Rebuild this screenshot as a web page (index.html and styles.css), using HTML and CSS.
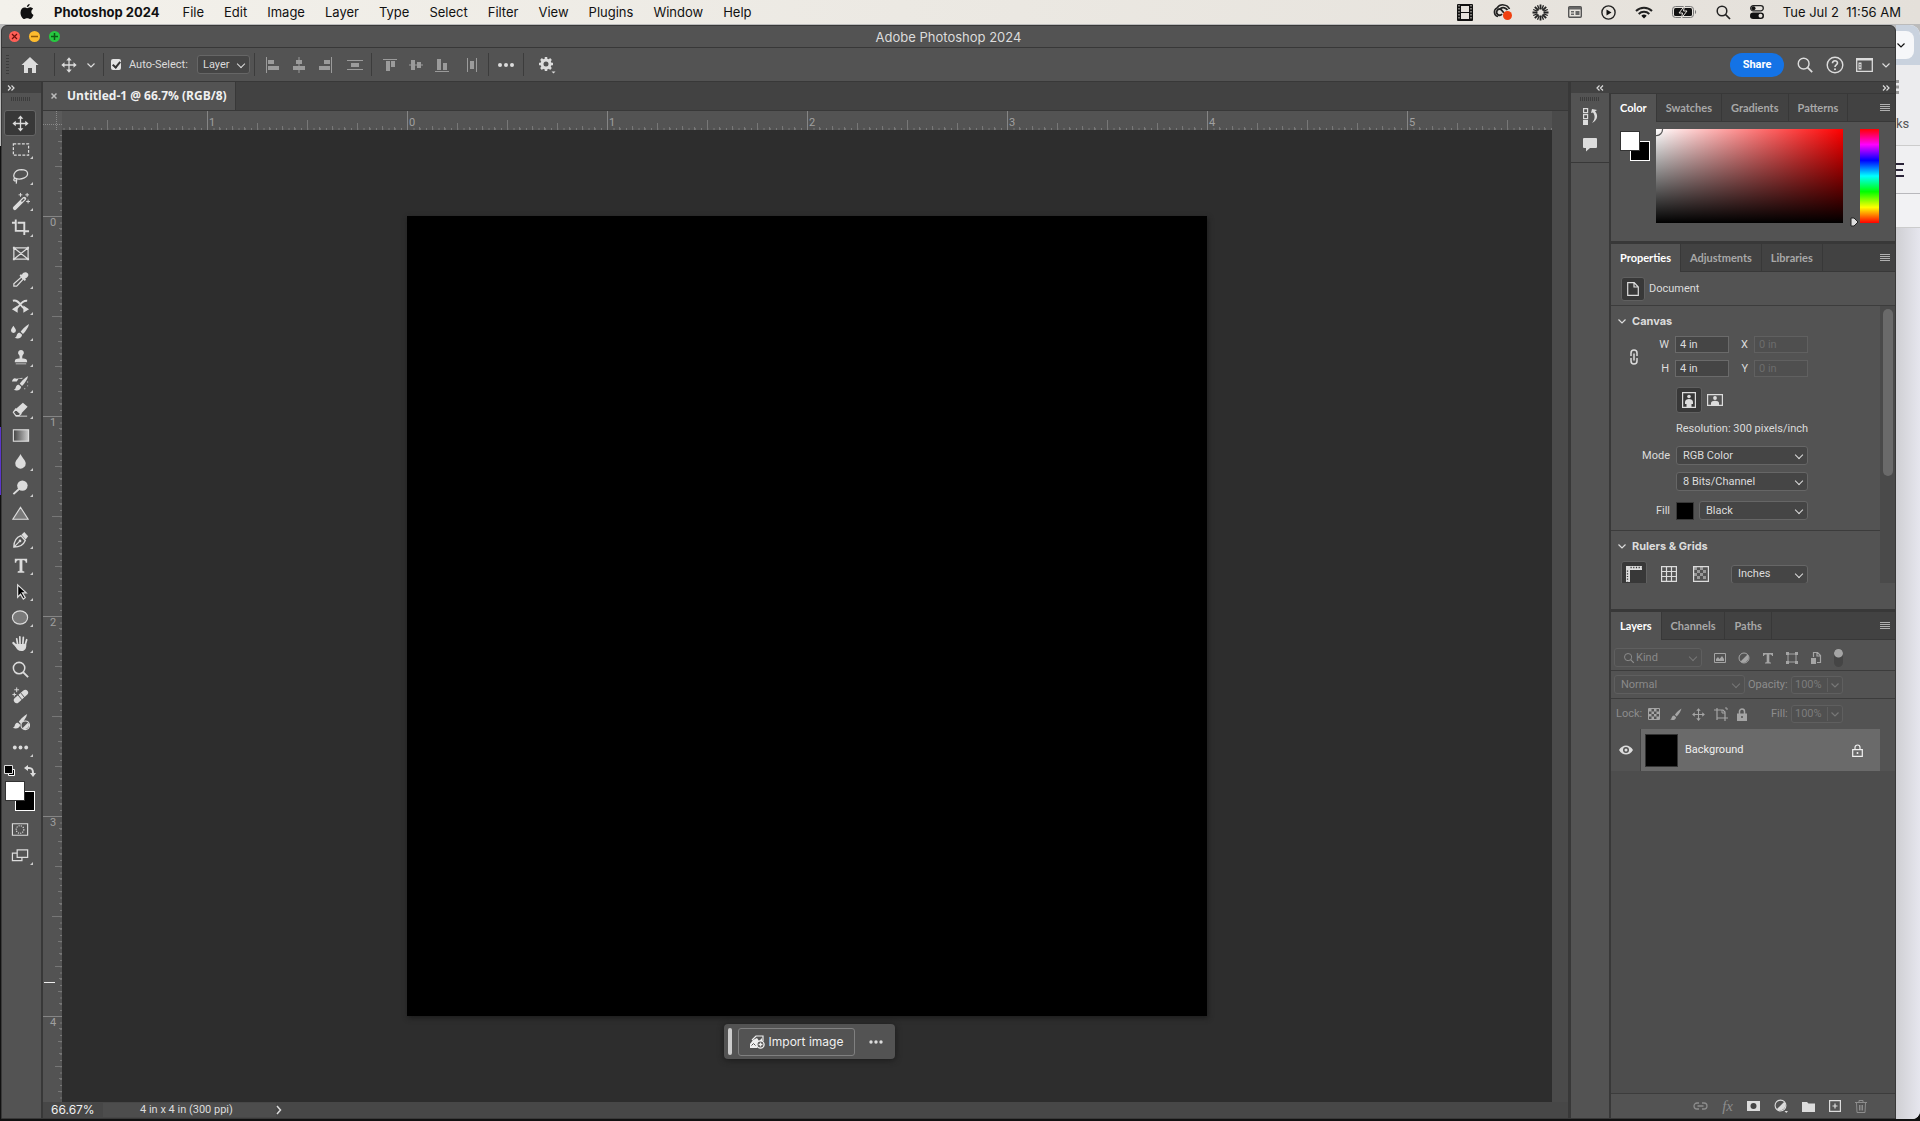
FILE: index.html
```html
<!DOCTYPE html>
<html lang="en">
<head>
  <meta charset="utf-8">
  <title>Adobe Photoshop 2024</title>
  <link rel="stylesheet" href="styles.css">
</head>
<body>
  <svg class="defs" aria-hidden="true">
    <symbol id="i-move" viewBox="0 0 20 20"><path d="M10 4v12M4 10h12" stroke="currentColor" stroke-width="1.4"/><path d="M10 1.500l3 3.500H7zM10 18.500l3-3.500H7zM1.500 10l3.500-3v6zM18.500 10l-3.500-3v6z"/></symbol>
    <symbol id="i-search" viewBox="0 0 20 20"><circle cx="8.500" cy="8.500" r="6" fill="none" stroke="currentColor" stroke-width="1.600"/><path d="M12.700 12.700l5.300 5.300" stroke="currentColor" stroke-width="2"/></symbol>
    <symbol id="i-chev" viewBox="0 0 10 10"><path d="M1.500 3.500l3.500 3.500 3.500-3.500" fill="none" stroke="currentColor" stroke-width="1.200"/></symbol>
    <symbol id="i-menu" viewBox="0 0 10 8"><path d="M0 .5h10M0 2.500h10M0 4.500h10M0 6.500h10" stroke="currentColor"/></symbol>
    <symbol id="i-half" viewBox="0 0 12 12"><circle cx="6" cy="6" r="5" fill="none" stroke="currentColor"/><path d="M9.500 2.500A5 5 0 0 1 2.500 9.500z"/></symbol>
    <symbol id="i-brush" viewBox="0 0 20 20"><path d="M18 2c-3 1.500-7 5.500-8.800 8.300l2.400 2.200C14.300 10 17.300 5.500 18 2zM8.300 11.300c-2.800 0-3 2-3.600 3.700-.4 1-1 1.400-1.900 1.700 3.500 1.300 7.600.5 7.900-3.200z"/></symbol>
    <symbol id="i-left2" viewBox="0 0 8 6"><path d="M3.500.5L1 3l2.500 2.500M7 .5L4.500 3 7 5.500" fill="none" stroke="currentColor" stroke-width="1.200"/></symbol>
    <symbol id="i-right2" viewBox="0 0 8 6"><path d="M1 .5L3.500 3 1 5.500M4.500.5L7 3 4.500 5.500" fill="none" stroke="currentColor" stroke-width="1.200"/></symbol>
  </svg>

  <header class="menubar">
    <svg class="apple" width="14" height="16" viewBox="0 0 14 16"><path d="M9.700 0c.1 1.500-1.300 3-2.800 3C6.700 1.600 8.200.1 9.700 0zM7.100 4.200c.7 0 1.700-.9 3.100-.9 1 0 2.100.5 2.900 1.500-2.600 1.600-2.100 5 .4 6.100-.6 1.700-2 4.100-3.500 4.100-1.100 0-1.500-.7-2.800-.7s-1.800.7-2.800.7C2.400 15 .5 11.600.5 8.700c0-3.300 2.100-5.200 4-5.200 1.200 0 2 .7 2.600.7z"/></svg>
    <nav>
      <a href="#" class="app">Photoshop 2024</a>
      <a href="#">File</a>
      <a href="#">Edit</a>
      <a href="#">Image</a>
      <a href="#">Layer</a>
      <a href="#">Type</a>
      <a href="#">Select</a>
      <a href="#">Filter</a>
      <a href="#">View</a>
      <a href="#">Plugins</a>
      <a href="#">Window</a>
      <a href="#">Help</a>
    </nav>
    <div class="tray">
      <svg width="16" height="17" viewBox="0 0 16 17"><rect width="16" height="17" rx="1"/><path d="M4 2h8v6H4zM4 9h8v6H4z" fill="#e6e2dc"/><path d="M2 1v15M14 1v15" stroke="#e6e2dc" stroke-dasharray="1.500 1.500"/></svg>
      <svg width="21" height="18" viewBox="0 0 21 18"><path d="M6 13.500a4.500 4.500 0 0 1-1-8.500A7 6.500 0 0 1 17.500 6" fill="none" stroke="#222" stroke-width="1.500"/><path d="M10 11a3 3 0 1 1-1-4.500l3 3.500M8.500 5.500a5 5 0 0 1 7 1.500" fill="none" stroke="#222" stroke-width="1.800"/><circle cx="15.500" cy="12.500" r="4.500" fill="#f04010"/></svg>
      <svg width="17" height="17" viewBox="0 0 17 17"><g stroke="#222" stroke-width="1.800"><path d="M8.500.5v5M8.500 11.500v5M.5 8.500h5M11.500 8.500h5M2.800 2.800l3.700 3.700M10.500 10.500l3.700 3.700M14.200 2.800l-3.700 3.700M6.500 10.500l-3.700 3.700"/><path d="M5.500 1.200l1.700 4M9.800 11.800l1.700 4M1.200 11.500l4-1.700M11.800 7.200l4-1.700M1.200 5.500l4 1.700M11.800 9.800l4 1.700M11.500 1.200l-1.700 4M7.200 11.800l-1.700 4" stroke-width="1.300"/></g></svg>
      <svg width="14" height="12" viewBox="0 0 14 12"><rect x=".7" y=".7" width="12.600" height="10.600" rx="1" fill="none" stroke="#555" stroke-width="1.400"/><path d="M1 1h12v2.500H1zM3 5h3v1.500H3zM3 7.500h3V9H3zM7.500 5h4v4h-4z" fill="#666"/></svg>
      <svg width="15" height="15" viewBox="0 0 15 15"><circle cx="7.500" cy="7.500" r="6.600" fill="none" stroke="#222" stroke-width="1.400"/><path d="M5.500 4.500l5 3-5 3z"/></svg>
      <svg width="18" height="13" viewBox="0 0 18 13"><path d="M1 5a11.500 11.500 0 0 1 16 0M3.700 8a7.600 7.600 0 0 1 10.600 0" fill="none" stroke="#222" stroke-width="2"/><path d="M9 12.500L6.300 9.800a4 4 0 0 1 5.400 0z"/></svg>
      <svg width="25" height="12" viewBox="0 0 25 12"><rect x=".5" y=".5" width="21" height="11" rx="3" fill="none" stroke="#777"/><rect x="2" y="2" width="18" height="8" rx="1.500"/><path d="M12.500 0L7 7h3.500L9.500 12 15 5h-3.500z" stroke="#e6e2dc"/><path d="M23 4v4c1.500-.5 1.500-3.500 0-4z" fill="#777"/></svg>
      <svg width="15" height="15" viewBox="0 0 15 15"><circle cx="6" cy="6" r="4.800" fill="none" stroke="#222" stroke-width="1.500"/><path d="M9.500 9.500l4.500 4.500" stroke="#222" stroke-width="1.700"/></svg>
      <svg width="14" height="14" viewBox="0 0 14 14"><rect x=".7" y=".7" width="12.600" height="5.200" rx="2.600" fill="none" stroke="#222" stroke-width="1.300"/><circle cx="3.500" cy="3.300" r="2"/><rect y="7.500" width="14" height="6.500" rx="3.200"/><circle cx="10.500" cy="10.700" r="2" fill="#e6e2dc"/></svg>
      <time>Tue Jul 2&nbsp; 11:56 AM</time>
    </div>
  </header>

  <div class="desktop">
    <div class="app-window">
      <div class="titlebar">
        <div class="lights">
          <button class="light red" aria-label="Close"><svg width="11" height="11" viewBox="0 0 11 11"><path d="M3 3l5 5M8 3L3 8" stroke="#6b0f0b" stroke-width="1.200"/></svg></button>
          <button class="light yellow" aria-label="Minimize"><svg width="11" height="11" viewBox="0 0 11 11"><path d="M2 5.500h7" stroke="#8f5a0a" stroke-width="1.500"/></svg></button>
          <button class="light green" aria-label="Zoom"><svg width="11" height="11" viewBox="0 0 11 11"><path d="M2 5.500h7M5.500 2v7" stroke="#0b5a14" stroke-width="1.500"/></svg></button>
        </div>
        Adobe Photoshop 2024
      </div>

      <div class="options">
        <div class="grip-v"></div>
        <button class="home" aria-label="Home"><svg width="18" height="18" viewBox="0 0 18 18"><path d="M9 1l8.500 8H15v8h-4v-5H7v5H3V9H.5z"/></svg></button>
        <div class="opt-group move-opt">
          <svg width="18" height="18"><use href="#i-move"/></svg>
          <svg width="10" height="10"><use href="#i-chev"/></svg>
        </div>
        <div class="opt-group auto">
          <input type="checkbox" id="auto" checked>
          <label for="auto">Auto-Select:</label>
          <span class="drop layer-drop"><select aria-label="Auto-select target"><option>Layer</option></select></span>
        </div>
        <div class="opt-group align">
          <svg width="16" height="16" viewBox="0 0 16 16"><path d="M1 0h1v16H1zM3 3h6v4H3zM3 9h11v4H3z"/></svg>
          <svg width="16" height="16" viewBox="0 0 16 16"><path d="M7.500 0h1v16h-1zM5 3h6v4H5zM2 9h12v4H2z"/></svg>
          <svg width="16" height="16" viewBox="0 0 16 16"><path d="M14 0h1v16h-1zM7 3h6v4H7zM2 9h11v4H2z"/></svg>
          <svg class="wide" width="16" height="16" viewBox="0 0 16 16"><path d="M0 3h16v1H0zM4 6h8v4H4zM0 12h16v1H0z"/></svg>
        </div>
        <div class="opt-group align">
          <svg width="16" height="16" viewBox="0 0 16 16"><path d="M1 2h14v1H1zM4 4h4v10H4zM9 4h4v6H9z"/></svg>
          <svg width="16" height="16" viewBox="0 0 16 16"><path d="M1 7.500h14v1H1zM3 3h4v10H3zM9 5h4v6H9z"/></svg>
          <svg width="16" height="16" viewBox="0 0 16 16"><path d="M1 14h14v1H1zM3 2h4v11H3zM9 6h4v7H9z"/></svg>
          <svg class="wide" width="16" height="16" viewBox="0 0 16 16"><path d="M3 1h1v14H3zM6 4h4v8H6zM12 1h1v14h-1z"/></svg>
        </div>
        <div class="opt-group dots-opt"><button aria-label="More options"><svg width="16" height="4" viewBox="0 0 16 4"><circle cx="2" cy="2" r="2"/><circle cx="8" cy="2" r="2"/><circle cx="14" cy="2" r="2"/></svg></button></div>
        <div class="opt-group gear-opt"><button aria-label="Settings"><svg width="18" height="18" viewBox="0 0 18 18"><circle cx="8" cy="8" r="4" fill="none" stroke="currentColor" stroke-width="3"/><path d="M8 1v3M8 12v3M1 8h3M12 8h3M3 3l2 2M11 11l2 2M13 3l-2 2M5 11l-2 2" stroke="currentColor" stroke-width="2.500"/><path d="M13.500 15.500h4l-2 2z"/></svg></button></div>
        <div class="opt-right">
          <button class="share">Share</button>
          <button aria-label="Search"><svg width="18" height="18"><use href="#i-search"/></svg></button>
          <button aria-label="Help"><svg width="18" height="18" viewBox="0 0 18 18"><circle cx="9" cy="9" r="7.800" fill="none" stroke="currentColor" stroke-width="1.400"/><path d="M6.500 7.300C6.500 4 11.500 4 11.500 7c0 2-2.500 1.800-2.500 4" fill="none" stroke="currentColor" stroke-width="1.600"/><circle cx="9" cy="13.200" r="1"/></svg></button>
          <button class="space" aria-label="Workspace"><svg width="17" height="14" viewBox="0 0 17 14"><path d="M.7.700h15.600v12.600H.7z" fill="none" stroke="currentColor" stroke-width="1.300"/><path d="M0 0h17v2.500H0zM2.500 4.500h3v7h-3z"/><path d="M3.200 6.800h1.600M3.200 9.200h1.600" stroke="#535353"/></svg><svg width="10" height="10"><use href="#i-chev"/></svg></button>
        </div>
      </div>

      <div class="body">
        <aside class="toolbox">
          <div class="strip"><svg width="8" height="6"><use href="#i-right2"/></svg></div>
          <div class="grip-h"></div>
          <button class="tool active" aria-label="Move"><svg><use href="#i-move"/></svg></button>
          <button class="tool more" aria-label="Marquee"><svg viewBox="0 0 20 20"><rect x="2.500" y="4" width="16" height="12" fill="none" stroke="currentColor" stroke-width="1.300" stroke-dasharray="3 1.500"/></svg></button>
          <button class="tool more" aria-label="Lasso"><svg viewBox="0 0 20 20"><path d="M5 13.500C1 11 3 4 11 3.800c8 0 8 6.500 3 8.700-3 1.300-6.500 1.500-9 .5zM6 15c-1.500 1.500-3.500.5-3-1s3-1 3 .5l-.5 4" fill="none" stroke="currentColor" stroke-width="1.300"/></svg></button>
          <button class="tool more" aria-label="Magic wand"><svg viewBox="0 0 20 20"><path d="M4 17L14 7" stroke="currentColor" stroke-width="4" stroke-linecap="round"/><path d="M11 10l3-3" stroke="#535353" stroke-width="1.500"/><path d="M10 1v4M8 3h4M17 1v4M15 3h4M18 8v4M16 10h4" stroke="currentColor"/></svg></button>
          <button class="tool more" aria-label="Crop"><svg viewBox="0 0 20 20"><path d="M1 5h3M5 1.500v12h8M7 5h7v13M15 14h4" fill="none" stroke="currentColor" stroke-width="2"/></svg></button>
          <button class="tool" aria-label="Frame"><svg viewBox="0 0 20 20"><path d="M3 4h15v12H3zM3 4l15 12M18 4L3 16" fill="none" stroke="currentColor" stroke-width="1.300"/><path d="M2 3h2v2H2zM17 3h2v2h-2zM2 15h2v2H2zM17 15h2v2h-2z"/></svg></button>
          <button class="tool more" aria-label="Eyedropper"><svg viewBox="0 0 20 20"><path d="M11 7.500l2 2L6 17H3v-2.500z" fill="none" stroke="currentColor" stroke-width="1.300"/><path d="M9 6l5.500 5.500 1.200-1.200-.7-1.500c3.500-1.500 4-4 2.500-5.500S13 2 11.500 5l-1.300-.5z"/></svg></button>
          <button class="tool more" aria-label="Content-aware move"><svg viewBox="0 0 20 20"><path d="M2 5c7-2 8 8 14 9M17 5c-7-1-8 8-13 9" fill="none" stroke="currentColor" stroke-width="2"/><path d="M1 14l6-4v7.500zM19 14l-6-4v7.500z"/></svg></button>
          <button class="tool more" aria-label="Mixer brush"><svg viewBox="0 0 20 20"><path d="M2.500 4C1 6.500 0 7.500 0 9a2.600 2.600 0 0 0 5.200 0c0-1.500-1.200-2.500-2.700-5z"/><use href="#i-brush" width="20" height="20" x="1" y="0"/></svg></button>
          <button class="tool more" aria-label="Clone stamp"><svg viewBox="0 0 20 20"><path d="M10.500 2a3 3 0 0 1 2 5.300c-.8 1-.7 2.400-.5 3.700 4 .2 5 .7 5 4H4c0-3.300 1-3.800 5-4 .2-1.300.3-2.700-.5-3.700a3 3 0 0 1 2-5.300zM5 16.200h11v1H5z"/></svg></button>
          <button class="tool more" aria-label="History brush"><svg viewBox="0 0 20 20"><use href="#i-brush"/><path d="M1 8c1-4 3-4 5-3l6-1v1H8L6 8zM14 15h1v1h-1zM17 12h1v1h-1zM17 8h1v1h-1z"/></svg></button>
          <button class="tool more" aria-label="Eraser"><svg viewBox="0 0 20 20"><path d="M12.500 3l5 4-7.500 8-5.500-5z"/><path d="M5 9.500l5.500 5-2 2H5L2.500 13z" fill="none" stroke="currentColor" stroke-width="1.300"/><path d="M5 17h12" stroke="currentColor"/></svg></button>
          <button class="tool" aria-label="Gradient"><svg viewBox="0 0 20 20"><defs><linearGradient id="tg"><stop stop-color="#444"/><stop offset="1" stop-color="#ccc"/></linearGradient></defs><rect x="2.500" y="4" width="16" height="12" fill="url(#tg)" stroke="currentColor" stroke-width="1.200"/></svg></button>
          <button class="tool more" aria-label="Blur"><svg viewBox="0 0 20 20"><path d="M10 2c-1.500 4-5.500 6.500-5.500 10a5.500 5.500 0 0 0 11 0C15.500 8.500 11.500 6 10 2z"/></svg></button>
          <button class="tool more" aria-label="Dodge"><svg viewBox="0 0 20 20"><circle cx="12" cy="8" r="5.500"/><path d="M9 11l-6.500 6" stroke="currentColor" stroke-width="2"/></svg></button>
          <button class="tool" aria-label="Triangle"><svg viewBox="0 0 20 20"><path d="M10 3.500l8 12.500H2z" fill="#7a7a7a" stroke="currentColor" stroke-width="1.200"/></svg></button>
          <button class="tool more" aria-label="Pen"><svg viewBox="0 0 20 20"><path d="M3 18C3 12 5 8 10.500 6l4.500 5c-2 5-6 7-12 7zM3 18l6-6" fill="none" stroke="currentColor" stroke-width="1.400"/><path d="M11 5l3-3 4 4.500L15.500 10z"/><circle cx="9.500" cy="11.500" r="1.400"/></svg></button>
          <button class="tool more" aria-label="Type"><svg viewBox="0 0 20 20"><path d="M4 3h13v4h-1.500c0-2-1-2.500-3.500-2.500V15c0 1 .5 1.200 2 1.200V17.500H7v-1.300c1.500 0 2-.2 2-1.200V4.500C6.500 4.500 5.500 5 5.500 7H4z"/></svg></button>
          <button class="tool more" aria-label="Path selection"><svg viewBox="0 0 20 20"><path d="M7 3v13l3-3 3 5 2-1.500-3-5h4z" fill="#000" stroke="currentColor" stroke-width="1.300"/></svg></button>
          <button class="tool more" aria-label="Ellipse"><svg viewBox="0 0 20 20"><ellipse cx="9.500" cy="10" rx="8" ry="7" fill="#7a7a7a" stroke="currentColor" stroke-width="1.200"/></svg></button>
          <button class="tool more" aria-label="Hand"><svg viewBox="0 0 20 20"><path d="M7 14L2.500 9.500" stroke="currentColor" stroke-width="2.400" stroke-linecap="round"/><path d="M7 11L6 5M9.500 10L9.300 3M12.500 10l.5-6.500M15 11l1.500-5" stroke="currentColor" stroke-width="1.800" stroke-linecap="round"/><path d="M5.500 10.500h10.500c.5 4-1 7.500-5 7.500-3.500 0-5-2-6.500-5z"/></svg></button>
          <button class="tool" aria-label="Zoom"><svg><use href="#i-search"/></svg></button>
          <button class="tool" aria-label="Spot healing"><svg viewBox="0 0 20 20"><path d="M6 15l9-8" stroke="currentColor" stroke-width="6" stroke-linecap="round"/><path d="M7.500 9.500l4 5M10.500 7.500l4 5" stroke="#535353"/><path d="M6 1.500v5M3.500 4h5M3.500 7v4M1.500 9h4" stroke="currentColor"/></svg></button>
          <button class="tool" aria-label="Adjustment brush"><svg viewBox="0 0 20 20"><use href="#i-brush" width="20" height="20" x="-1" y="0"/><circle cx="15" cy="14" r="4.500" fill="#535353" stroke="currentColor" stroke-width="1.200"/><path d="M18 11a4.300 4.300 0 0 1-6 6z"/></svg></button>
          <button class="tool more" aria-label="Edit toolbar"><svg viewBox="0 0 20 20"><circle cx="4" cy="10" r="2"/><circle cx="10" cy="10" r="2"/><circle cx="16" cy="10" r="2"/></svg></button>
          <div class="swap">
            <svg width="12" height="12" viewBox="0 0 12 12"><path d="M4.500 4.500h6v6h-6z" fill="#000" stroke="#fff"/><path d="M.5.500h8v8h-8z" fill="#000" stroke="#ddd"/></svg>
            <svg width="12" height="12" viewBox="0 0 12 12"><path d="M3 3h2c3 0 4 1 4 5" fill="none" stroke="currentColor" stroke-width="2"/><path d="M0 3l4-3v6zM9 12L6 8h6z"/></svg>
          </div>
          <div class="fgbg">
            <button class="bg" aria-label="Background color"></button>
            <button class="fg" aria-label="Foreground color"></button>
          </div>
          <button class="tool" aria-label="Quick mask"><svg viewBox="0 0 20 20"><path d="M1.500 4h16v12h-16z" fill="none" stroke="currentColor" stroke-width="1.200"/><circle cx="9.500" cy="10" r="4" fill="none" stroke="currentColor" stroke-width="1.200" stroke-dasharray="1.200 1.200"/></svg></button>
          <button class="tool more" aria-label="Screen mode"><svg viewBox="0 0 20 20"><path d="M1.500 7.500h10v8h-10z" fill="none" stroke="currentColor" stroke-width="1.300"/><path d="M6.500 4h11v8h-11z" fill="#535353" stroke="currentColor" stroke-width="1.300"/></svg></button>
        </aside>

        <main class="document">
          <div class="doc-tabs">
            <div class="doc-tab"><button aria-label="Close document"><svg width="6" height="6" viewBox="0 0 6 6"><path d="M.5.500l5 5M5.500.500l-5 5" stroke="currentColor" stroke-width="1.500"/></svg></button>Untitled-1 @ 66.7% (RGB/8)</div>
          </div>
          <div class="view">
            <div class="corner"></div>
            <svg class="ruler-top" width="100%" height="19">
              <defs>
                <pattern id="rt" x="345" width="200" height="19" patternUnits="userSpaceOnUse">
                  <path d="M.5 0v19" stroke="#858585"/>
                  <path d="M100.500 9v10M50.500 12v7M150.500 12v7" stroke="#777"/>
                  <path d="M25.500 15v4M75.500 15v4M125.500 15v4M175.500 15v4M12.500 16v3M37.500 16v3M62.500 16v3M87.500 16v3M112.500 16v3M137.500 16v3M162.500 16v3M187.500 16v3" stroke="#777"/>
                  <path d="M6.500 18h194" stroke="#777" stroke-width="2" stroke-dasharray="1 5.250"/>
                </pattern>
              </defs>
              <rect width="100%" height="19" fill="url(#rt)"/>
              <g class="nums"><text x="147" y="15">1</text><text x="347" y="15">0</text><text x="547" y="15">1</text><text x="747" y="15">2</text><text x="947" y="15">3</text><text x="1147" y="15">4</text><text x="1347" y="15">5</text></g>
            </svg>
            <div class="scroll-gap"></div>
            <svg class="ruler-left" width="19" height="100%">
              <defs>
                <pattern id="rl" y="86" width="19" height="200" patternUnits="userSpaceOnUse">
                  <path d="M0 .5h19" stroke="#858585"/>
                  <path d="M9 100.500h10M12 50.500h7M12 150.500h7" stroke="#777"/>
                  <path d="M15 25.500h4M15 75.500h4M15 125.500h4M15 175.500h4M16 12.500h3M16 37.500h3M16 62.500h3M16 87.500h3M16 112.500h3M16 137.500h3M16 162.500h3M16 187.500h3" stroke="#777"/>
                  <path d="M18 6.500v194" stroke="#777" stroke-width="2" stroke-dasharray="1 5.250"/>
                </pattern>
              </defs>
              <rect width="19" height="100%" fill="url(#rl)"/>
              <path d="M1 852.500h11" stroke="#eee"/>
              <g class="nums"><text x="7" y="96">0</text><text x="7" y="296">1</text><text x="7" y="496">2</text><text x="7" y="696">3</text><text x="7" y="896">4</text></g>
            </svg>
            <div class="stage">
              <div class="artboard"></div>
              <div class="taskbar">
                <i></i>
                <button class="import"><svg width="15" height="14" viewBox="0 0 15 14"><path d="M2 5l4-4h7v5" fill="none" stroke="currentColor" stroke-width="1.200"/><path d="M0 13V9l3-4 4-2 2 3 3-3v3L7 13z"/><path d="M1.500 10.500l2-2 2 2" fill="none" stroke="#535353"/><circle cx="10.500" cy="9.500" r="3.600" fill="#535353" stroke="currentColor" stroke-width="1.300"/><path d="M10.500 7.500v4M8.500 9.500h4" stroke="currentColor" stroke-width="1.300"/></svg>Import image</button>
                <button class="dots" aria-label="More"><svg width="14" height="4" viewBox="0 0 14 4"><circle cx="2" cy="2" r="1.700"/><circle cx="7" cy="2" r="1.700"/><circle cx="12" cy="2" r="1.700"/></svg></button>
              </div>
            </div>
            <div class="scroll-gap"></div>
          </div>
          <div class="status">
            <span class="zoom">66.67%</span>
            <span class="info">4 in x 4 in (300 ppi)</span>
            <svg width="6" height="10" viewBox="0 0 6 10"><path d="M1 1l3.500 4L1 9" fill="none" stroke="currentColor" stroke-width="1.500"/></svg>
          </div>
        </main>

        <aside class="dock">
          <div class="strip"><svg width="8" height="6"><use href="#i-left2"/></svg></div>
          <div class="dock-icons">
            <div class="grip-h"></div>
            <button aria-label="History"><svg width="15" height="18" viewBox="0 0 15 18"><path d="M.6.600h4v4h-4zM.6 6.600h4v4h-4z" fill="none" stroke="currentColor" stroke-width="1.200"/><path d="M0 12h5v5H0zM8 5l1-4 5 1-2 1.500c4 4 2 9-3 11.500 3-4 3.500-7 1-10.500z"/></svg></button>
            <button aria-label="Comments"><svg width="14" height="14" viewBox="0 0 14 14"><path d="M1 0h12a1 1 0 0 1 1 1v8a1 1 0 0 1-1 1H7l-4 3.500V10H1a1 1 0 0 1-1-1V1a1 1 0 0 1 1-1z"/></svg></button>
          </div>
        </aside>

        <aside class="panels">
          <div class="strip end"><svg width="8" height="6"><use href="#i-right2"/></svg></div>

          <section class="panel color-panel">
            <div class="tabs">
              <button class="tab on">Color</button><button class="tab">Swatches</button><button class="tab">Gradients</button><button class="tab">Patterns</button>
              <svg class="burger" width="10" height="8"><use href="#i-menu"/></svg>
            </div>
            <div class="color-body">
              <div class="fgbg">
                <button class="bg" aria-label="Background color"></button>
                <button class="fg" aria-label="Foreground color"></button>
              </div>
              <div class="field"><svg width="8" height="8" viewBox="0 0 8 8"><path d="M6.500 0A6 6 0 0 1 0 6.500" fill="none" stroke="#555" stroke-width="1.200"/></svg></div>
              <div class="hue"><svg width="9" height="10" viewBox="0 0 9 10"><path d="M1 1h3l4 4-4 4H1z" fill="#ddd" stroke="#222"/></svg></div>
            </div>
          </section>

          <section class="panel props">
            <div class="tabs">
              <button class="tab on">Properties</button><button class="tab">Adjustments</button><button class="tab">Libraries</button>
              <svg class="burger" width="10" height="8"><use href="#i-menu"/></svg>
            </div>
            <div class="doc-row">
              <span class="sq"><svg width="12" height="14" viewBox="0 0 12 14"><path d="M.7.700h6.500L11.300 5v8.300H.7zM7 .7V5h4" fill="none" stroke="currentColor" stroke-width="1.200"/></svg></span>
              Document
            </div>
            <div class="props-scroll">
              <div class="props-main">
                <div class="group">
                  <h3><svg width="10" height="10"><use href="#i-chev"/></svg>Canvas</h3>
                  <div class="dims">
                    <svg class="link" width="10" height="16" viewBox="0 0 10 16"><path d="M2 7V4a3 3 0 0 1 6 0v3M2 9v3a3 3 0 0 0 6 0V9M5 4.500v7" fill="none" stroke="currentColor" stroke-width="1.500"/></svg>
                    <label for="w">W</label><input id="w" value="4 in">
                    <label for="x">X</label><input id="x" value="0 in" disabled>
                    <label for="h">H</label><input id="h" value="4 in">
                    <label for="y">Y</label><input id="y" value="0 in" disabled>
                  </div>
                  <div class="orient">
                    <button class="sq" aria-label="Portrait"><svg width="14" height="16" viewBox="0 0 14 16"><path d="M.6.600h12.800v14.800H.6z" fill="none" stroke="currentColor" stroke-width="1.200"/><circle cx="7" cy="4.500" r="1.800"/><path d="M3 10c0-4 8-4 8 0v2H9.500v3h-5v-3H3z"/></svg></button>
                    <button aria-label="Landscape"><svg width="16" height="12" viewBox="0 0 16 12"><path d="M.6.600h14.800v10.800H.6z" fill="none" stroke="currentColor" stroke-width="1.200"/><circle cx="8" cy="4" r="1.900"/><path d="M4 11V9c0-3 8-3 8 0v2z"/></svg></button>
                  </div>
                  <p>Resolution: 300 pixels/inch</p>
                  <div class="row"><label for="mode">Mode</label><span class="drop"><select id="mode"><option>RGB Color</option></select></span></div>
                  <div class="row"><label></label><span class="drop"><select aria-label="Bit depth"><option>8 Bits/Channel</option></select></span></div>
                  <div class="row fill"><label for="fill">Fill</label><i></i><span class="drop"><select id="fill"><option>Black</option></select></span></div>
                </div>
                <div class="group">
                  <h3><svg width="10" height="10"><use href="#i-chev"/></svg>Rulers &amp; Grids</h3>
                  <div class="grids">
                    <button class="sq" aria-label="Rulers"><svg width="16" height="16" viewBox="0 0 16 16"><path d="M0 0h16v4H4v12H0z"/><path d="M4.500 1.500h11M1.500 4.500v11" stroke="#333" stroke-width="1.300" stroke-dasharray="1.200 1.500"/></svg></button>
                    <button aria-label="Grid"><svg width="16" height="16" viewBox="0 0 16 16"><path d="M.6.600h14.800v14.800H.6zM5.500 0v16M10.500 0v16M0 5.500h16M0 10.500h16" fill="none" stroke="currentColor" stroke-width="1.200"/></svg></button>
                    <button aria-label="Transparency grid"><svg width="16" height="16" viewBox="0 0 16 16"><path d="M1 1h3v3H1zM7 1h3v3H7zM4 4h3v3H4zM10 4h3v3h-3zM1 7h3v3H1zM7 7h3v3H7zM4 10h3v3H4zM10 10h3v3h-3z" fill="#999"/><path d="M.6.600h14.800v14.800H.6z" fill="none" stroke="currentColor" stroke-width="1.200"/></svg></button>
                    <span class="drop"><select aria-label="Units"><option>Inches</option></select></span>
                  </div>
                </div>
              </div>
              <div class="bar"><i></i></div>
            </div>
          </section>

          <section class="panel layers">
            <div class="tabs">
              <button class="tab on">Layers</button><button class="tab">Channels</button><button class="tab">Paths</button>
              <svg class="burger" width="10" height="8"><use href="#i-menu"/></svg>
            </div>
            <div class="filter dim">
              <span class="drop kind"><svg width="12" height="12"><use href="#i-search"/></svg><select aria-label="Filter" disabled><option>Kind</option></select></span>
              <svg width="12" height="12" viewBox="0 0 12 12"><path d="M.5 1.500h11v9H.5z" fill="none" stroke="currentColor"/><path d="M2 9V7l2-2 1.500 2L8 4l2 3v2z"/></svg>
              <svg width="12" height="12"><use href="#i-half"/></svg>
              <svg width="12" height="12" viewBox="0 0 12 12"><path d="M1 1h10v3h-1c0-1-.5-1.500-2.700-1.500v7c0 .7.500 1 1.700 1v1H3v-1c1.200 0 1.700-.3 1.700-1v-7C2.500 2.500 2 3 2 4H1z"/></svg>
              <svg width="12" height="12" viewBox="0 0 12 12"><path d="M2 2h8v8H2z" fill="none" stroke="currentColor"/><path d="M0 0h3v3H0zM9 0h3v3H9zM0 9h3v3H0zM9 9h3v3H9z"/></svg>
              <svg width="12" height="12" viewBox="0 0 12 12"><path d="M3.500 5V.5h4l3 3v7H7M7 .5v3.500h3.500" fill="none" stroke="currentColor" stroke-width="1.200"/><path d="M1 6h5v6H1z"/></svg>
              <span class="toggle"></span>
            </div>
            <div class="blend dim">
              <span class="drop"><select aria-label="Blend mode" disabled><option>Normal</option></select></span>
              <label for="op">Opacity:</label>
              <span class="pct"><input id="op" value="100%" disabled><svg width="10" height="10"><use href="#i-chev"/></svg></span>
            </div>
            <div class="lock dim">
              <span>Lock:</span>
              <svg width="12" height="12" viewBox="0 0 12 12"><path d="M.5.500h11v11H.5z" fill="none" stroke="currentColor"/><path d="M1 1h2.500v2.500H1zM6 1h2.500v2.500H6zM3.500 3.500H6V6H3.500zM8.500 3.500H11V6H8.500zM1 6h2.500v2.500H1zM6 6h2.500v2.500H6zM3.500 8.500H6V11H3.500zM8.500 8.500H11V11H8.500z"/></svg>
              <svg width="15" height="15"><use href="#i-brush"/></svg>
              <svg width="15" height="15"><use href="#i-move"/></svg>
              <svg width="14" height="14" viewBox="0 0 14 14"><path d="M3 1v12M0 3h9l2 2v9M3 11h11" fill="none" stroke="currentColor" stroke-width="1.200"/><path d="M8 3v3h3M11 1h2v2" fill="none" stroke="currentColor"/></svg>
              <svg width="12" height="13" viewBox="0 0 12 13"><path d="M3.500 6V3.500a2.500 2.500 0 0 1 5 0V6" fill="none" stroke="currentColor" stroke-width="1.500"/><path d="M1 5.500h10V13H1z"/><circle cx="6" cy="9" r="1" fill="#535353"/></svg>
              <label for="fl">Fill:</label>
              <span class="pct"><input id="fl" value="100%" disabled><svg width="10" height="10"><use href="#i-chev"/></svg></span>
            </div>
            <div class="layer">
              <button class="eye" aria-label="Toggle visibility"><svg width="14" height="10" viewBox="0 0 14 10"><path d="M0 5c3.500-6 10.500-6 14 0-3.500 6-10.500 6-14 0z"/><circle cx="7" cy="5" r="3" fill="#535353"/><circle cx="7" cy="5" r="1.500"/></svg></button>
              <div class="layer-item">
                <span class="thumb"></span>
                <span class="name">Background</span>
                <svg width="11" height="13" viewBox="0 0 11 13"><path d="M3 5.500V3.500a2.500 2.500 0 0 1 5 0v2M.7 5.600h9.600v6.700H.7z" fill="none" stroke="currentColor" stroke-width="1.200"/><circle cx="5.500" cy="9" r="1"/></svg>
              </div>
            </div>
            <div class="empty"></div>
            <div class="layer-foot">
              <button class="off" aria-label="Link layers"><svg width="15" height="8" viewBox="0 0 15 8"><path d="M6 1H4a3 3 0 0 0 0 6h2M9 1h2a3 3 0 0 1 0 6H9M4.500 4h6" fill="none" stroke="currentColor" stroke-width="1.300"/></svg></button>
              <button class="off fx" aria-label="Layer style">fx</button>
              <button aria-label="Add mask"><svg width="13" height="10" viewBox="0 0 13 10"><path d="M0 0h13v10H0z"/><circle cx="6.500" cy="5" r="3" fill="#444"/></svg></button>
              <button aria-label="Adjustment layer"><svg width="14" height="14" viewBox="0 0 14 14"><use href="#i-half" width="13" height="13"/><path d="M10.500 12h3.500l-1.700 2z"/></svg></button>
              <button aria-label="New group"><svg width="13" height="11" viewBox="0 0 13 11"><path d="M0 1h5l1.500 1.500H13V11H0z"/></svg></button>
              <button aria-label="New layer"><svg width="12" height="12" viewBox="0 0 12 12"><path d="M.6.600h10.800v10.800H.6zM6 3.500v5M3.500 6h5" fill="none" stroke="currentColor" stroke-width="1.200"/></svg></button>
              <button class="off" aria-label="Delete layer"><svg width="12" height="13" viewBox="0 0 12 13"><path d="M0 2.500h12M4 2.500v-2h4v2M1.500 3l.5 9.500h8l.5-9.500M4.500 5v5.500M6 5v5.500M7.500 5v5.500" fill="none" stroke="currentColor"/></svg></button>
            </div>
          </section>
        </aside>
      </div>
    </div>

    <!-- browser window showing past the right edge -->
    <div class="behind">
      <div class="b-top"><span><svg width="10" height="10"><use href="#i-chev"/></svg></span></div>
      <div class="b-ext"><svg width="6" height="14" viewBox="0 0 6 14"><path d="M1.500 0v14" stroke="#999" stroke-width="3" stroke-dasharray="3 2.500"/></svg></div>
      <div class="b-marks">ks</div>
      <div class="b-nav"><svg width="8" height="14" viewBox="0 0 8 14"><path d="M0 1h8M0 7h7M0 13h8" stroke="#2a2438" stroke-width="2"/></svg></div>
      <div class="b-card"></div>
      <div class="b-rest"></div>
    </div>
  </div>
</body>
</html>
```
FILE: styles.css
```css
* {
  box-sizing: border-box;
}
body {
  margin: 0;
  min-height: 100vh;
  display: flex;
  flex-direction: column;
  background: #000;
  color: #dcdcdc;
  font-family: Roboto, "Liberation Sans", sans-serif;
  font-size: 11px;
  line-height: 14px;
  overflow-x: hidden;
}
button, input, select {
  font: inherit;
  color: inherit;
  margin: 0;
  padding: 0;
  border: 0;
  background: none;
  border-radius: 0;
}
button {
  display: flex;
  align-items: center;
  justify-content: center;
}
svg {
  display: block;
  fill: currentColor;
  flex: none;
}
.defs {
  position: absolute;
  width: 0;
  height: 0;
}

/* mac menu bar */
.menubar {
  display: flex;
  align-items: center;
  height: 24px;
  padding: 0 19px 0 20px;
  background: linear-gradient(90deg, #f3f1eb, #e4e0da);
  color: #111;
  font-family: Inter, sans-serif;
  font-size: 13px;
}
.menubar nav {
  display: flex;
  gap: 20px;
  margin-left: 20px;
}
.menubar a {
  color: #111;
  text-decoration: none;
}
.menubar .app {
  margin-right: 3px;
  font-weight: 700;
}
.tray {
  display: flex;
  align-items: center;
  gap: 19px;
  margin-left: auto;
}

.desktop {
  flex: 1;
  display: flex;
  padding: 1px 0 2px 1px;
  background: linear-gradient(#bbb 122px, #111 122px, #111 403px, #5b35c9 403px, #5b35c9 471px, #111 471px);
}
.app-window {
  flex: 1;
  min-width: 0;
  display: flex;
  flex-direction: column;
  border: 1px solid #383838;
  border-radius: 6px 6px 0 0;
  background: #383838;
  overflow: hidden;
}
.titlebar {
  position: relative;
  height: 21px;
  background: #535353;
  text-align: center;
  font-family: Inter, sans-serif;
  font-size: 13px;
  line-height: 22px;
}
.lights {
  position: absolute;
  left: 7px;
  top: 5px;
  display: flex;
  gap: 9px;
}
.light {
  width: 11px;
  height: 11px;
  border-radius: 50%;
}
.red { background: #fe5f57; }
.yellow { background: #febb2e; }
.green { background: #27c840; }

/* options bar */
.options {
  display: flex;
  align-items: center;
  height: 33px;
  margin: 1px 0;
  background: #535353;
}
.grip-v {
  width: 3px;
  height: 20px;
  margin-left: 4px;
  background: repeating-linear-gradient(#3c3c3c 0 1px, #535353 1px 3px);
}
.home {
  width: 45px;
  padding-right: 4px;
}
.opt-group {
  display: flex;
  align-items: center;
  height: 23px;
  border-left: 1px solid #3c3c3c;
}
.move-opt {
  width: 49px;
  padding-left: 5px;
  gap: 8px;
}
.auto {
  width: 151px;
  padding-left: 7px;
}
.auto label {
  flex: 1;
  margin-left: 8px;
  white-space: nowrap;
}
.auto input {
  appearance: none;
  width: 10px;
  height: 11px;
  border-radius: 2px;
  background: #e2e2e2;
}
.auto input:checked::after {
  content: "";
  display: block;
  width: 3px;
  height: 6px;
  margin: 1px 0 0 3px;
  border: solid #333;
  border-width: 0 2px 2px 0;
  transform: rotate(40deg);
}
.drop {
  position: relative;
  display: flex;
  flex: 1;
  height: 19px;
  border: 1px solid #666;
  border-radius: 3px;
  background: #454545;
}
.drop select {
  appearance: none;
  flex: 1;
  min-width: 0;
  padding-left: 6px;
  opacity: 1;
}
.drop::after {
  content: "";
  position: absolute;
  right: 5px;
  top: 5px;
  width: 5px;
  height: 5px;
  border: solid #dcdcdc;
  border-width: 0 1px 1px 0;
  transform: rotate(45deg);
  pointer-events: none;
}
.layer-drop {
  flex: none;
  width: 53px;
  margin-right: 4px;
}
.layer-drop select {
  padding-left: 5px;
}
.align {
  width: 117px;
  padding-left: 10px;
  gap: 10px;
  color: #9b9b9b;
}
.align .wide {
  margin-left: 4px;
}
.dots-opt {
  width: 35px;
  padding-left: 9px;
}
.gear-opt {
  padding-left: 14px;
}
.opt-right {
  display: flex;
  align-items: center;
  gap: 12px;
  margin-left: auto;
  padding-right: 4px;
}
.share {
  width: 54px;
  height: 24px;
  border-radius: 12px;
  background: #1473e6;
  color: #fff;
  font-weight: 700;
}
.space {
  gap: 8px;
}

.body {
  flex: 1;
  display: flex;
  min-height: 0;
}
.strip {
  display: flex;
  align-items: center;
  height: 11px;
  padding: 0 5px;
  margin-bottom: 1px;
  background: #424242;
}
.strip.end {
  justify-content: flex-end;
}

/* tools */
.toolbox {
  display: flex;
  flex-direction: column;
  width: 39px;
  margin-right: 2px;
  background: #535353;
}
.grip-h {
  width: 20px;
  height: 4px;
  margin: 3px 0 9px 9px;
  background: repeating-linear-gradient(90deg, #3c3c3c 0 1px, #535353 1px 2px);
}
.tool {
  position: relative;
  width: 32px;
  height: 26px;
  margin-left: 2px;
}
.tool svg {
  width: 19px;
  height: 19px;
}
.tool.active {
  border: 1px solid #666;
  border-radius: 3px;
  background: #383838;
}
.tool.more::after {
  content: "";
  position: absolute;
  right: 3px;
  bottom: 3px;
  border: solid transparent;
  border-width: 3px 0 0 3px;
  border-right: 0;
  border-bottom: 3px solid #ccc;
  border-top: 0;
}
.swap {
  display: flex;
  gap: 8px;
  padding-left: 2px;
  margin-top: 5px;
}
.fgbg {
  position: relative;
  width: 30px;
  height: 30px;
}
.fgbg button {
  position: absolute;
  width: 20px;
  height: 20px;
  border: 1px solid #333;
}
.fgbg .fg {
  left: 0;
  top: 0;
  background: #fff;
}
.fgbg .bg {
  right: 0;
  bottom: 0;
  background: #000;
  border-color: #fff;
}
.toolbox .fgbg {
  margin: 4px 0 5px 3px;
}

/* document */
.document {
  flex: 1;
  min-width: 0;
  display: flex;
  flex-direction: column;
  background: #4a4a4a;
}
.doc-tabs {
  height: 29px;
  background: #424242;
  border-bottom: 1px solid #383838;
  display: flex;
}
.doc-tab {
  display: flex;
  align-items: center;
  gap: 10px;
  padding: 0 8px;
  background: #535353;
  border-right: 1px solid #383838;
  color: #f0f0f0;
  font-family: "Open Sans", sans-serif;
  font-size: 12px;
  font-weight: 700;
}
.doc-tab button {
  color: #bbb;
}
.view {
  flex: 1;
  display: grid;
  grid-template-columns: 19px minmax(0, 1fr) 16px;
  grid-template-rows: 19px minmax(0, 1fr);
}
.corner {
  position: relative;
  background: #5a5a5a;
}
.corner::before, .corner::after {
  content: "";
  position: absolute;
}
.corner::before {
  left: 13px;
  top: 0;
  bottom: 0;
  border-left: 1px dotted #888;
}
.corner::after {
  top: 13px;
  left: 0;
  right: 0;
  border-top: 1px dotted #888;
}
.ruler-top, .ruler-left {
  background: #535353;
}
.nums {
  fill: #a0a0a0;
  font-size: 11px;
}
.scroll-gap {
  background: #4a4a4a;
}
.stage {
  position: relative;
  background: #2d2d2d;
  overflow: hidden;
}
.artboard {
  position: absolute;
  left: 345px;
  top: 86px;
  width: 800px;
  height: 800px;
  background: #000;
  box-shadow: 1px 2px 5px #1c1c1c;
}
.taskbar {
  position: absolute;
  left: 662px;
  top: 894px;
  display: flex;
  align-items: center;
  width: 171px;
  height: 35px;
  padding: 3px 4px;
  border-radius: 4px;
  background: #535353;
  box-shadow: 0 1px 6px #1a1a1a;
  font-family: Inter, sans-serif;
  font-size: 12px;
}
.taskbar i {
  width: 4px;
  height: 27px;
  border-radius: 2px;
  background: #ccc;
}
.import {
  width: 117px;
  height: 28px;
  margin-left: 6px;
  gap: 4px;
  border: 1px solid #808080;
  border-radius: 3px;
  color: #f0f0f0;
}
.dots {
  flex: 1;
  padding-left: 6px;
}
.status {
  display: flex;
  align-items: center;
  height: 16px;
  background: #474747;
}
.zoom {
  width: 60px;
  padding-left: 8px;
  color: #f0f0f0;
  font-family: Inter, sans-serif;
  font-size: 12px;
}
.info {
  width: 173px;
  padding-left: 37px;
  background: #4d4d4d;
}

/* collapsed dock */
.dock {
  display: flex;
  flex-direction: column;
  width: 38px;
  margin-left: 3px;
  background: #535353;
}
.dock .strip {
  justify-content: flex-end;
}
.dock-icons {
  height: 69px;
  border-bottom: 1px solid #383838;
}
.dock-icons button {
  width: 38px;
  margin-bottom: 12px;
}
.dock-icons .grip-h {
  margin-bottom: 7px;
}

/* panels */
.panels {
  display: flex;
  flex-direction: column;
  width: 286px;
}
.panel {
  margin: 0 0 3px 2px;
  background: #535353;
}
.tabs {
  display: flex;
  height: 28px;
  background: #424242;
  box-shadow: inset 0 -1px #383838;
}
.tab {
  padding: 0 9px 1px;
  border-right: 1px solid #383838;
  color: #a8a8a8;
  font-family: Lato, sans-serif;
  font-weight: 700;
}
.tab.on {
  background: #535353;
  color: #fff;
}
.burger {
  margin: 10px 5px 0 auto;
  color: #b0b0b0;
}
.color-body {
  display: flex;
  height: 119px;
  padding: 7px 16px 0 9px;
}
.color-body .fgbg {
  margin: 2px 6px 0 0;
}
.field {
  flex: 1;
  height: 94px;
  background: linear-gradient(transparent, #000), linear-gradient(90deg, #fff, #f00);
}
.hue {
  position: relative;
  width: 19px;
  height: 94px;
  margin-left: 17px;
  background: linear-gradient(#f00, #f0f, #00f, #0ff, #0f0, #ff0, #f00);
}
.hue svg {
  position: absolute;
  left: -10px;
  bottom: -4px;
}
.doc-row {
  display: flex;
  align-items: center;
  gap: 4px;
  height: 34px;
  padding-left: 10px;
  border-bottom: 1px solid #3c3c3c;
}
.sq {
  display: flex;
  align-items: center;
  justify-content: center;
  width: 24px;
  height: 24px;
  border: 1px solid #606060;
  border-radius: 3px;
  background: #383838;
}
.props-scroll {
  display: flex;
  height: 277px;
  margin-bottom: 26px;
  overflow: hidden;
}
.props-main {
  flex: 1;
}
.group + .group {
  border-top: 1px solid #3c3c3c;
}
.group h3 {
  display: flex;
  align-items: center;
  gap: 5px;
  height: 30px;
  margin: 0 0 0 6px;
  font-family: Inter, sans-serif;
  font-size: 11px;
  font-weight: 700;
}
.dims {
  display: grid;
  grid-template-columns: 34px 18px 54px 13px 54px;
  column-gap: 6px;
  row-gap: 7px;
  align-items: center;
  text-align: right;
}
.dims .link {
  grid-row: span 2;
  justify-self: end;
  margin-right: 6px;
}
.dims input {
  width: 54px;
  height: 17px;
  padding-left: 4px;
  border: 1px solid #6a6a6a;
  background: #454545;
}
.dims input:disabled {
  border-color: #606060;
  background: #4f4f4f;
  color: #6c6c6c;
}
.orient {
  display: flex;
  align-items: center;
  gap: 5px;
  margin: 10px 0 0 65px;
}
.orient .sq, .grids .sq {
  width: 26px;
  height: 26px;
}
.group p {
  margin: 9px 0 10px 65px;
}
.row {
  display: flex;
  align-items: center;
  gap: 6px;
  margin: 0 72px 7px 0;
}
.row label {
  width: 59px;
  text-align: right;
}
.row.fill {
  margin: 10px 72px 10px 0;
}
.row i {
  width: 18px;
  height: 18px;
  margin-right: -1px;
  border: 1px solid #383838;
  background: #000;
}
.grids {
  display: flex;
  align-items: center;
  gap: 12px;
  padding-left: 10px;
}
.grids .drop {
  flex: none;
  width: 77px;
  margin-left: 8px;
}
.grids button + button {
  width: 20px;
}
.bar {
  width: 15px;
  padding: 3px;
  background: #4a4a4a;
}
.bar i {
  display: block;
  width: 10px;
  height: 167px;
  border-radius: 5px;
  background: #6a6a6a;
}

/* layers */
.layers {
  flex: 1;
  display: flex;
  flex-direction: column;
  margin-bottom: 0;
}
.dim {
  display: flex;
  align-items: center;
  padding-left: 3px;
  color: #8d8d8d;
}
.dim .drop, .pct {
  background: #505050;
  border-color: #5f5f5f;
}
.dim select:disabled, .dim input:disabled {
  color: #7c7c7c;
}
.dim select:disabled {
  color: #8a8a8a;
}
.dim .drop::after {
  border-color: #777;
}
.dim > svg {
  color: #a5a5a5;
}
.filter {
  height: 31px;
  padding-top: 5px;
  gap: 12px;
  border-bottom: 1px solid #3c3c3c;
}
.filter .kind {
  flex: none;
  width: 88px;
  align-items: center;
  padding-left: 8px;
}
.kind select {
  padding-left: 1px;
}
.toggle {
  width: 9px;
  height: 18px;
  border-radius: 5px;
  background: radial-gradient(circle at 50% 4px, #a5a5a5 4px, #454545 5px);
}
.blend {
  height: 28px;
  border-bottom: 1px solid #3c3c3c;
}
.blend .drop {
  flex: none;
  width: 131px;
}
.blend label {
  width: 43px;
  margin-left: 3px;
}
.pct {
  display: flex;
  align-items: center;
  width: 52px;
  height: 18px;
  border: 1px solid #5f5f5f;
  border-radius: 3px;
  color: #777;
}
.pct input {
  width: 36px;
  padding-left: 3px;
  border-right: 1px solid #5f5f5f;
}
.pct svg {
  margin-left: 2px;
}
.lock {
  height: 30px;
  padding-left: 5px;
  gap: 8px;
}
.lock span:first-child {
  width: 24px;
}
.lock label {
  width: 16px;
  margin-left: 15px;
}
.lock .pct {
  margin-left: -4px;
}
.layer {
  display: flex;
  height: 42px;
  margin-right: 15px;
}
.eye {
  width: 30px;
  border-right: 1px solid #444;
}
.layer-item {
  flex: 1;
  display: flex;
  align-items: center;
  padding: 0 17px 0 4px;
  background: #6a6a6a;
  color: #f0f0f0;
}
.thumb {
  width: 33px;
  height: 33px;
  border: 1px solid #333;
  background: #000;
}
.name {
  flex: 1;
  margin-left: 7px;
}
.empty {
  flex: 1;
  background: #4d4d4d;
}
.layer-foot {
  display: flex;
  justify-content: flex-end;
  align-items: center;
  gap: 14px;
  height: 25px;
  padding-right: 28px;
  border-top: 1px solid #3c3c3c;
}
.off {
  color: #8d8d8d;
}
.fx {
  font-family: "Liberation Serif", serif;
  font-size: 15px;
  font-style: italic;
}

/* browser behind */
.behind {
  width: 24px;
  display: flex;
  flex-direction: column;
  background: #fff;
  border-radius: 0 10px 8px 0;
  overflow: hidden;
  color: #555;
}
.b-top {
  height: 40px;
  padding-top: 6px;
  background: #c9d2de;
}
.b-top span {
  display: flex;
  align-items: center;
  width: 18px;
  height: 28px;
  border-radius: 0 8px 8px 0;
  background: #f6f7f9;
  color: #111;
}
.b-ext {
  height: 52px;
  padding-top: 15px;
  background: #ececee;
}
.b-marks {
  height: 29px;
  background: #ececee;
  border-bottom: 1px solid #ccc;
  font-size: 13px;
}
.b-nav {
  height: 48px;
  padding-top: 17px;
  background: #f0f0f2;
  border-bottom: 1px solid #b8b8bc;
}
.b-card {
  height: 34px;
  background: #f2f2f4;
  border-bottom: 1px solid #ccc;
}
.b-rest {
  flex: 1;
  background: linear-gradient(90deg, #cfcfd3, #e6e6ee);
}
```
